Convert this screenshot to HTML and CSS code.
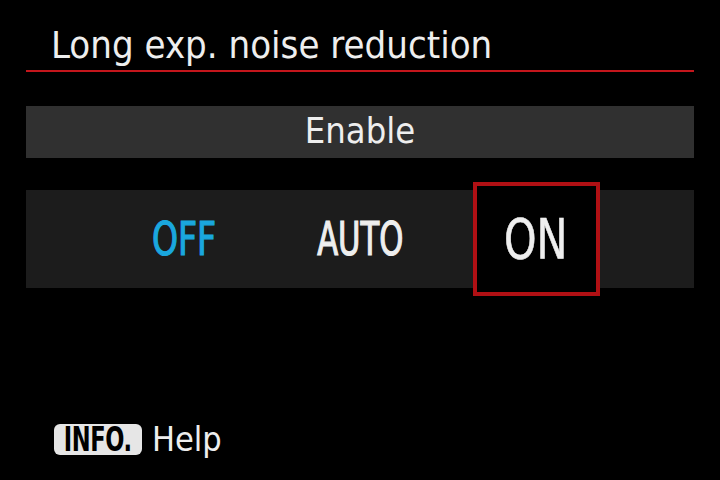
FILE: index.html
```html
<!DOCTYPE html>
<html>
<head>
<meta charset="utf-8">
<link rel="stylesheet" href="styles.css">
</head>
<body>
<div class="screen">
  <div class="title">Long exp. noise reduction</div>
  <div class="value-bar">Enable</div>
  <div class="options">
    <div class="opt opt-current"><span class="opt-label">OFF</span></div>
    <div class="opt"><span class="opt-label opt-label-tight">AUTO</span></div>
    <div class="opt opt-selected"><span class="opt-label">ON</span></div>
  </div>
  <div class="footer">
    <span class="info-badge"><span class="info-text">INFO.</span></span>
    <span class="help">Help</span>
  </div>
</div>
</body>
</html>
```
FILE: styles.css
```css
html, body {
  margin: 0;
  padding: 0;
  background: #000;
}
.screen {
  width: 720px;
  height: 480px;
  box-sizing: border-box;
  padding: 0 26px;
  display: flex;
  flex-direction: column;
  font-family: "DejaVu Sans Condensed", "DejaVu Sans", sans-serif;
  font-stretch: condensed;
  color: #eeeeee;
}
.title {
  font-size: 38px;
  line-height: 44px;
  padding: 23px 0 3px 25px;
  border-bottom: 2px solid #c4161c;
  white-space: nowrap;
}
.value-bar {
  margin-top: 34px;
  height: 52px;
  box-sizing: border-box;
  background: #303030;
  text-align: center;
  font-size: 36px;
  line-height: 50px;
  padding-bottom: 2px;
}
.options {
  margin-top: 32px;
  height: 98px;
  background: #1c1c1c;
  display: grid;
  grid-template-columns: repeat(3, 176px);
  grid-template-rows: 98px;
  justify-content: center;
  align-items: center;
}
.opt {
  justify-self: center;
  display: flex;
  align-items: center;
  justify-content: center;
  font-size: 46px;
  line-height: 50px;
  -webkit-text-stroke: 1.2px currentColor;
}
.opt-label {
  display: inline-block;
  transform: scaleX(0.8);
}
.opt-label-tight {
  transform: scaleX(0.74);
}
.opt-current {
  color: #1aa7de;
}
.opt-selected {
  align-self: stretch;
  margin: -8px 0;
  width: 127px;
  box-sizing: border-box;
  border: 4px solid #b01014;
  background: #000;
  font-size: 56px;
  -webkit-text-stroke: 0.6px currentColor;
}
.opt-selected .opt-label {
  transform: scaleX(0.82);
}
.footer {
  margin-top: 136px;
  display: flex;
  align-items: center;
  gap: 10px;
  padding-left: 28px;
}
.info-badge {
  display: inline-flex;
  align-items: center;
  justify-content: center;
  width: 88px;
  height: 31px;
  box-sizing: border-box;
  background: #e6e6e6;
  border-radius: 6px;
  color: #000;
  font-weight: bold;
  font-size: 33px;
  line-height: 31px;
}
.info-text {
  display: inline-block;
  transform: scaleX(0.76);
  letter-spacing: -0.5px;
}
.help {
  font-size: 34px;
  line-height: 31px;
}
```
